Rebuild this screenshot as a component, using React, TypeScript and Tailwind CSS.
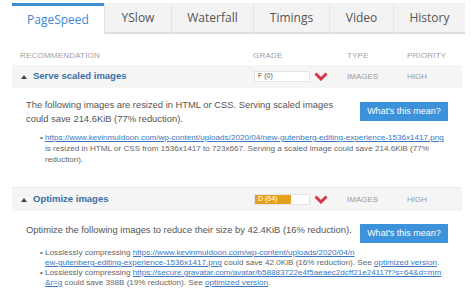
import React from 'react';

// Tabs across the top of the report
const tabs = [
  { label: 'PageSpeed', w: 'w-[92px]', active: true },
  { label: 'YSlow', w: 'w-[67px]' },
  { label: 'Waterfall', w: 'w-[82px]' },
  { label: 'Timings', w: 'w-[76px]' },
  { label: 'Video', w: 'w-[64px]' },
  { label: 'History', w: 'w-[72px]' },
];

const Chevron = () => (
  <svg width="14" height="9" viewBox="0 0 14 9" className="shrink-0">
    <path d="M1.5 1.5 L7 7 L12.5 1.5" fill="none" stroke="#d9344c" strokeWidth="3" strokeLinejoin="miter" />
  </svg>
);

const Caret = () => (
  <svg width="6" height="4" viewBox="0 0 6 4" className="shrink-0">
    <path d="M0 4 L3 0 L6 4 Z" fill="#444" />
  </svg>
);

interface RowProps {
  title: string;
  grade: React.ReactNode;
}

// Collapsed header of one recommendation
const RuleRow: React.FC<RowProps> = ({ title, grade }) => (
  <div className="flex items-center h-[23px] bg-[#f5f5f5] mx-[12px]">
    <div className="w-[241px] flex items-center pl-[9px]">
      <Caret />
      <span className="ml-[6px] text-[9.5px] font-bold text-[#3c6fa6]">{title}</span>
    </div>
    <div className="w-[94px] flex items-center">
      {grade}
      <div className="ml-[4px]">
        <Chevron />
      </div>
    </div>
    <div className="w-[60px] text-[8px] text-[#9a9a9a]">IMAGES</div>
    <div className="text-[8px] text-[#9a9a9a]">HIGH</div>
  </div>
);

const Button: React.FC<{ className?: string }> = ({ className }) => (
  <div
    className={`float-right ml-[4px] w-[88px] h-[19px] bg-[#3c93dc] text-white text-[9px] flex items-center justify-center ${className ?? ''}`}
  >
    What's this mean?
  </div>
);

// urls may break anywhere, like the report does
const Url: React.FC<{ children: React.ReactNode }> = ({ children }) => (
  <span className="text-[#3a78c3] underline break-all">{children}</span>
);

const Link: React.FC<{ children: React.ReactNode }> = ({ children }) => (
  <span className="text-[#3a78c3] underline">{children}</span>
);

// bullet line with a hanging indent, so text can flow around the floated button
const Item: React.FC<{ children: React.ReactNode }> = ({ children }) => (
  <li className="pl-[5px] -indent-[5px]">
    <span>• </span>
    {children}
  </li>
);

export default function App() {
  return (
    <div
      className="w-[474px] h-[294px] bg-white overflow-hidden"
      style={{ fontFamily: '"Liberation Sans", Arial, sans-serif' }}
    >
      {/* tab bar */}
      <div className="flex pt-[3px] pl-[12px]" style={{ fontFamily: '"Open Sans", sans-serif' }}>
        {tabs.map((t) =>
          t.active ? (
            <div
              key={t.label}
              className={`${t.w} h-[31px] border-t-[3px] border-[#3a8ed3] bg-white flex items-center justify-center text-[12px] text-[#3d8ad0]`}
            >
              {t.label}
            </div>
          ) : (
            <div
              key={t.label}
              className={`${t.w} h-[31px] bg-[#f3f3f3] border-l border-[#e6e6e6] border-b-2 border-b-[#dedede] flex items-center justify-center text-[12px] text-[#555]`}
            >
              {t.label}
            </div>
          )
        )}
      </div>

      {/* column headings */}
      <div className="flex items-center h-[14px] mt-[15px] mx-[12px] text-[8px] text-[#a0a0a0] tracking-[0.2px]">
        <div className="w-[241px] pl-[8px]">RECOMMENDATION</div>
        <div className="w-[94px]">GRADE</div>
        <div className="w-[60px]">TYPE</div>
        <div>PRIORITY</div>
      </div>

      <div className="mt-[2px]">
        <RuleRow
          title="Serve scaled images"
          grade={
            <div className="ml-[1px] w-[56px] h-[11px] bg-white border border-[#e4e4e4] text-[7px] text-[#555] flex items-center pl-[3px]">
              F (0)
            </div>
          }
        />
      </div>

      {/* details of first rule */}
      <div className="flow-root mx-[12px] pl-[14px] pr-[14px] pt-[10px]">
        <Button className="mt-[4px] mb-[4px]" />
        <p className="text-[9.4px] leading-[14px] text-[#555]">
          The following images are resized in HTML or CSS. Serving scaled images could save 214.6KiB (77% reduction).
        </p>
        <ul className="mt-[6px] ml-[14px] text-[8.1px] leading-[11px] text-[#666]">
          <Item>
            <Url>https://www.kevinmuldoon.com/wp-content/uploads/2020/04/new-gutenberg-editing-experience-1536x1417.png</Url>{' '}
            is resized in HTML or CSS from 1536x1417 to 723x667. Serving a scaled image could save 214.6KiB (77% reduction).
          </Item>
        </ul>
      </div>

      {/* second rule */}
      <div className="mt-[22px] border-t border-[#ececec] mx-[12px]" />
      <RuleRow
        title="Optimize images"
        grade={
          <div className="ml-[1px] w-[56px] h-[11px] bg-white border border-[#e4e4e4] flex">
            <div className="w-[36px] h-full bg-[#e6a01e] text-[7px] text-white flex items-center pl-[3px]">D (64)</div>
          </div>
        }
      />

      <div className="flow-root mx-[12px] pl-[14px] pr-[14px] pt-[12px]">
        <Button className="mt-[1px] mb-[10px]" />
        <p className="text-[9.4px] leading-[14px] text-[#555]">
          Optimize the following images to reduce their size by 42.4KiB (16% reduction).
        </p>
        <ul className="mt-[11px] ml-[14px] mr-[2px] text-[8.1px] leading-[10px] text-[#666]">
          <Item>
            Losslessly compressing{' '}
            <Url>https://www.kevinmuldoon.com/wp-content/uploads/2020/04/new-gutenberg-editing-experience-1536x1417.png</Url>{' '}
            could save 42.0KiB (16% reduction). See <Link>optimized version</Link>.
          </Item>
          <Item>
            Losslessly compressing{' '}
            <Url>https://secure.gravatar.com/avatar/b58883722e4f5aeaec2dcff21e24117f?s=64&amp;d=mm&amp;r=g</Url>{' '}
            could save 398B (19% reduction). See <Link>optimized version</Link>.
          </Item>
        </ul>
      </div>
    </div>
  );
}
